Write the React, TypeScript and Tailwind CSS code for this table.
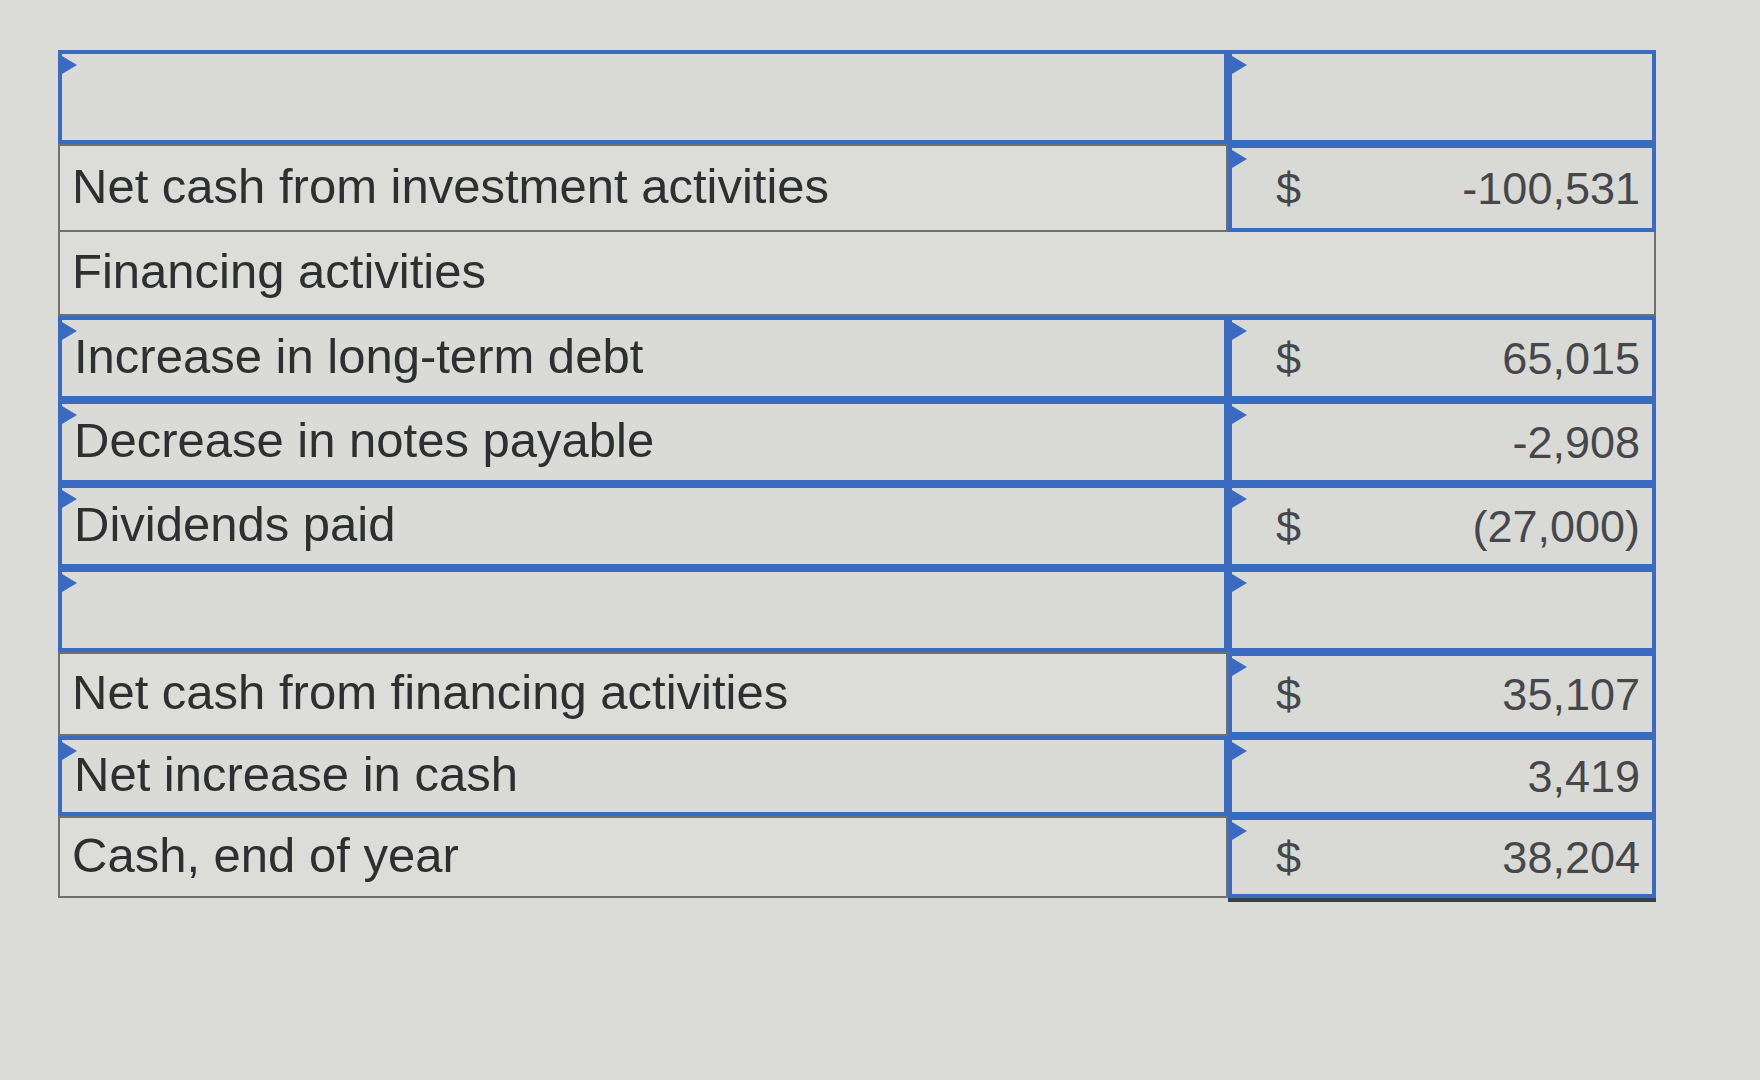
import React from "react"

type Row = {
  label?: string
  left: "input" | "plain"
  right?: "input" | "plain" | "span"
  dollar?: boolean
  value?: string
  h: string
}

const rows: Row[] = [
  { left: "input", right: "input", h: "h-[94px]" },
  { label: "Net cash from investment activities", left: "plain", right: "input", dollar: true, value: "-100,531", h: "h-[88px]" },
  { label: "Financing activities", left: "plain", right: "span", h: "h-[84px]" },
  { label: "Increase in long-term debt", left: "input", right: "input", dollar: true, value: "65,015", h: "h-[84px]" },
  { label: "Decrease in notes payable", left: "input", right: "input", value: "-2,908", h: "h-[84px]" },
  { label: "Dividends paid", left: "input", right: "input", dollar: true, value: "(27,000)", h: "h-[84px]" },
  { left: "input", right: "input", h: "h-[84px]" },
  { label: "Net cash from financing activities", left: "plain", right: "input", dollar: true, value: "35,107", h: "h-[84px]" },
  { label: "Net increase in cash", left: "input", right: "input", value: "3,419", h: "h-[80px]" },
  { label: "Cash, end of year", left: "plain", right: "input", dollar: true, value: "38,204", h: "h-[82px]" },
]

function Flag() {
  return (
    <span className="absolute left-0 top-[2px] w-0 h-0 border-y-[9px] border-y-transparent border-l-[15px] border-l-[#3a6bc0]" />
  )
}

export default function App() {
  return (
    <div className="min-h-screen w-full bg-[#dbdcd8] pt-[50px] pl-[58px] font-['Liberation_Sans',Arial,sans-serif] text-[#2e2f31]">
      <div className="w-[1598px] flex flex-col">
        {rows.map((r, i) => (
          <div key={i} className={`flex ${r.h}`}>
            {r.right === "span" ? (
              <div className="flex-1 flex items-center pl-3 pb-1 bg-[#dcddd9] border-x-2 border-b-2 border-[#707070] text-[49px] leading-none">
                {r.label}
              </div>
            ) : (
              <>
                {r.left === "input" ? (
                  <div className="relative w-[1170px] flex items-center pl-3 pb-1 bg-[#dadbd7] border-[4px] border-[#3a6bc0] text-[49px] leading-none">
                    <Flag />
                    {r.label}
                  </div>
                ) : (
                  <div className="w-[1170px] flex items-center pl-3 pb-1 bg-[#dcddd9] border-x-2 border-y-2 border-[#707070] text-[49px] leading-none">
                    {r.label}
                  </div>
                )}
                <div
                  className={`relative flex-1 flex items-center pl-[44px] pr-3 bg-[#d9dad6] border-[4px] border-[#3a6bc0] text-[45px] leading-none text-[#45474b] ${
                    i === rows.length - 1 ? "shadow-[0_4px_0_#3b3f4a]" : ""
                  }`}
                >
                  <Flag />
                  <span className="w-[40px]">{r.dollar ? "$" : ""}</span>
                  <span className="ml-auto">{r.value}</span>
                </div>
              </>
            )}
          </div>
        ))}
      </div>
    </div>
  )
}
